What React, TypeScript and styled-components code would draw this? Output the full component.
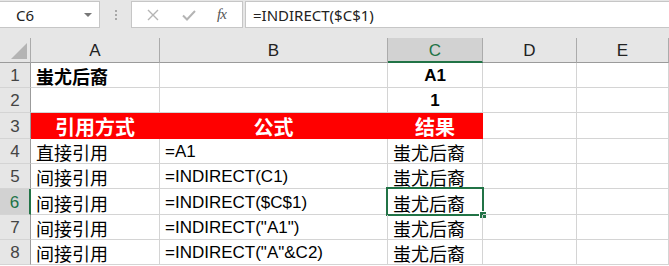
import React from "react";
import styled, { createGlobalStyle, css } from "styled-components";

const GlobalStyle = createGlobalStyle`
  html, body {
    margin: 0;
    padding: 0;
    background: #ffffff;
  }
  body {
    width: 669px;
    height: 266px;
    overflow: hidden;
    font-family: "Liberation Sans", "Noto Sans CJK SC", sans-serif;
  }
`;

const GREEN = "#217346";
const GRID = "#d4d4d4";
const RED = "#ff0000";

// formula bar

const Toolbar = styled.div`
  display: flex;
  align-items: flex-start;
  height: 38px;
  padding-top: 1px;
  box-sizing: border-box;
  background: #e6e6e6;
`;

const NameBox = styled.div`
  position: relative;
  display: flex;
  align-items: center;
  width: 100px;
  height: 27px;
  padding-left: 16px;
  box-sizing: border-box;
  background: #fff;
  border: 1px solid #c6c6c6;
  border-left: none;
  font-family: "Noto Sans", "Open Sans", sans-serif;
  font-size: 15px;
  color: #222;
`;

const Caret = styled.span`
  position: absolute;
  right: 7px;
  top: 11px;
  width: 0;
  height: 0;
  border-left: 4px solid transparent;
  border-right: 4px solid transparent;
  border-top: 4px solid #777;
`;

const Dots = styled.div`
  display: flex;
  flex-direction: column;
  align-items: center;
  gap: 2px;
  width: 31px;
  padding-top: 9px;

  span {
    width: 2px;
    height: 2px;
    background: #a8a8a8;
  }
`;

const FxBox = styled.div`
  display: flex;
  align-items: center;
  justify-content: space-around;
  width: 112px;
  height: 27px;
  padding: 0 6px 0 4px;
  box-sizing: border-box;
  background: #fff;
  border: 1px solid #c6c6c6;
`;

const Fx = styled.span`
  font-family: "Liberation Serif", serif;
  font-style: italic;
  font-size: 15px;
  color: #555;
  letter-spacing: -1px;
`;

const FormulaBox = styled.div`
  flex: 1;
  display: flex;
  align-items: center;
  height: 27px;
  margin-left: 2px;
  padding-left: 7px;
  box-sizing: border-box;
  background: #fff;
  border: 1px solid #c6c6c6;
  border-right: none;
  font-family: "Noto Sans", "Open Sans", sans-serif;
  font-size: 15px;
  color: #222;
`;

// sheet grid

const Sheet = styled.div`
  display: grid;
  grid-template-columns: 31px 129px 228px 95px 94px 1fr;
  grid-template-rows: 25px 25px 25px 26px 25px 25px 26px 25px 25px;
`;

const Corner = styled.div`
  position: relative;
  background: #e6e6e6;
  border-right: 1px solid #ababab;
  border-bottom: 1px solid #9b9b9b;

  &::after {
    content: "";
    position: absolute;
    right: 3px;
    bottom: 3px;
    width: 0;
    height: 0;
    border-left: 16px solid transparent;
    border-bottom: 16px solid #b4b4b4;
  }
`;

const ColHead = styled.div<{ $active?: boolean }>`
  display: flex;
  align-items: center;
  justify-content: center;
  padding-top: 2px;
  box-sizing: border-box;
  background: #e6e6e6;
  border-right: 1px solid #ababab;
  border-bottom: 1px solid #9b9b9b;
  font-size: 17px;
  color: #222;
  ${(p) =>
    p.$active &&
    css`
      background: #d2d2d2;
      color: ${GREEN};
      border-bottom: 2px solid ${GREEN};
    `}
`;

const RowHead = styled.div<{ $active?: boolean }>`
  display: flex;
  align-items: flex-end;
  justify-content: center;
  padding-bottom: 1px;
  box-sizing: border-box;
  background: #e6e6e6;
  border-right: 1px solid #9b9b9b;
  border-bottom: 1px solid #d4d4d4;
  font-size: 17px;
  line-height: 20px;
  color: #444;
  ${(p) =>
    p.$active &&
    css`
      background: #d2d2d2;
      color: ${GREEN};
      border-right: 2px solid ${GREEN};
    `}
`;

const Cell = styled.div<{
  $align?: "left" | "center";
  $bold?: boolean;
  $head?: boolean;
  $latin?: boolean;
}>`
  position: relative;
  display: flex;
  align-items: flex-end;
  justify-content: ${(p) => (p.$align === "center" ? "center" : "flex-start")};
  padding: 0 0 1px 5px;
  box-sizing: border-box;
  border-right: 1px solid ${GRID};
  border-bottom: 1px solid ${GRID};
  font-family: ${(p) =>
    p.$latin
      ? `"Liberation Sans", "Noto Sans CJK SC", sans-serif`
      : `"Noto Sans CJK SC", sans-serif`};
  font-size: ${(p) => (p.$latin ? "17px" : "18px")};
  line-height: 20px;
  font-weight: ${(p) => (p.$bold ? 700 : 400)};
  color: #000;
  white-space: nowrap;
  ${(p) =>
    p.$align === "center" &&
    css`
      padding-left: 0;
    `}
  ${(p) =>
    p.$head &&
    css`
      background: ${RED};
      border-color: ${RED};
      color: #fff;
      font-size: 20px;
      font-weight: 700;
    `}
`;

const Selection = styled.div`
  position: absolute;
  left: -2px;
  top: -2px;
  right: -2px;
  bottom: -2px;
  border: 2px solid ${GREEN};
  pointer-events: none;

  &::after {
    content: "";
    position: absolute;
    right: -5px;
    bottom: -5px;
    width: 6px;
    height: 6px;
    background: ${GREEN};
    border: 1px solid #fff;
  }
`;

const XIcon = () => (
  <svg width="14" height="14" viewBox="0 0 14 14">
    <path d="M2 2 L12 12 M12 2 L2 12" stroke="#b4b4b4" strokeWidth="1.4" fill="none" />
  </svg>
);

const CheckIcon = () => (
  <svg width="16" height="14" viewBox="0 0 16 14">
    <path d="M2 7.5 L6 11.5 L14 3" stroke="#b4b4b4" strokeWidth="2" fill="none" />
  </svg>
);

const rows = [
  { a: "直接引用", b: "=A1" },
  { a: "间接引用", b: "=INDIRECT(C1)" },
  { a: "间接引用", b: "=INDIRECT($C$1)", selected: true },
  { a: "间接引用", b: '=INDIRECT("A1")' },
  { a: "间接引用", b: '=INDIRECT("A"&C2)' },
];

const cols = ["A", "B", "C", "D", "E"];

export default function App() {
  return (
    <>
      <GlobalStyle />
      <Toolbar>
        <NameBox>
          C6
          <Caret />
        </NameBox>
        <Dots>
          <span />
          <span />
          <span />
        </Dots>
        <FxBox>
          <XIcon />
          <CheckIcon />
          <Fx>fx</Fx>
        </FxBox>
        <FormulaBox>=INDIRECT($C$1)</FormulaBox>
      </Toolbar>

      <Sheet>
        <Corner />
        {cols.map((c) => (
          <ColHead key={c} $active={c === "C"}>
            {c}
          </ColHead>
        ))}

        {/* row 1 */}
        <RowHead>1</RowHead>
        <Cell $bold>蚩尤后裔</Cell>
        <Cell />
        <Cell $align="center" $bold $latin>
          A1
        </Cell>
        <Cell />
        <Cell />

        {/* row 2 */}
        <RowHead>2</RowHead>
        <Cell />
        <Cell />
        <Cell $align="center" $bold $latin>
          1
        </Cell>
        <Cell />
        <Cell />

        {/* row 3 - table header */}
        <RowHead>3</RowHead>
        <Cell $head $align="center">引用方式</Cell>
        <Cell $head $align="center">公式</Cell>
        <Cell $head $align="center">结果</Cell>
        <Cell />
        <Cell />

        {rows.map((r, i) => (
          <React.Fragment key={i}>
            <RowHead $active={r.selected}>{i + 4}</RowHead>
            <Cell>{r.a}</Cell>
            <Cell $latin>{r.b}</Cell>
            <Cell>
              蚩尤后裔
              {r.selected && <Selection />}
            </Cell>
            <Cell />
            <Cell />
          </React.Fragment>
        ))}
      </Sheet>
    </>
  );
}
